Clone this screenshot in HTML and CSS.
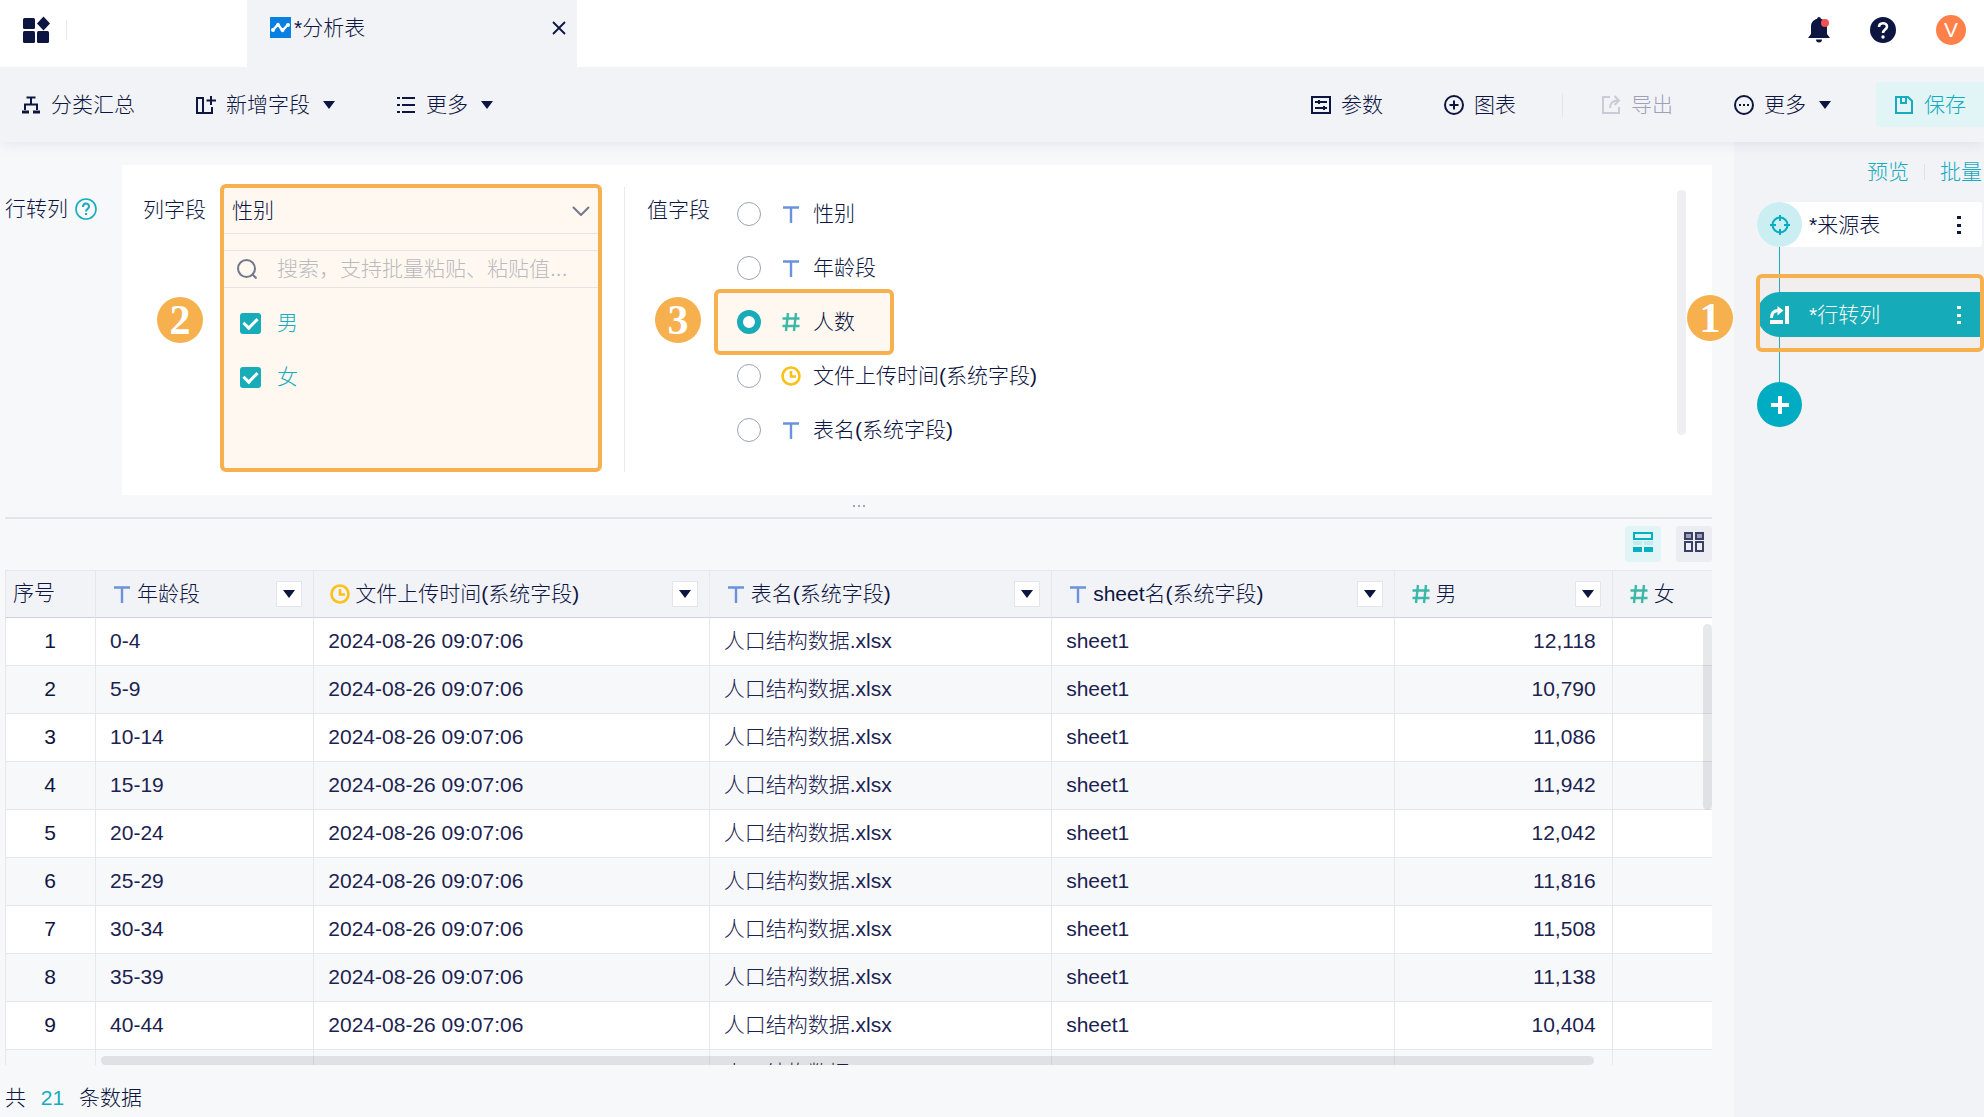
FILE: index.html
```html
<!doctype html>
<html lang="zh-CN">
  <head>
    <meta charset="utf-8" />
    <meta name="viewport" content="width=device-width, initial-scale=1" />
    <title>分析表</title>
    <link rel="stylesheet" href="styles.css">
  </head>
  <body>
    <!-- shared icons -->
    <svg class="sprite" aria-hidden="true">
      <symbol id="caret" viewBox="0 0 12 8"><path d="M0 0h12L6 8z" fill="currentColor" /></symbol>
      <symbol id="type-text" viewBox="0 0 20 20">
        <path d="M2 3.5h16M10 3.5V19" fill="none" stroke="#6a93dd" stroke-width="2.4" />
      </symbol>
      <symbol id="type-number" viewBox="0 0 20 20">
        <path d="M1.5 6.5h17M1.5 14h17M7 1L5 19M15 1l-2 18" fill="none" stroke="#3cb8a8" stroke-width="2.4" />
      </symbol>
      <symbol id="type-time" viewBox="0 0 20 20">
        <circle cx="10" cy="10" r="8.5" fill="none" stroke="#fbc116" stroke-width="2.6" />
        <path d="M10 5v5.5h5" fill="none" stroke="#fbc116" stroke-width="2.6" />
      </symbol>
      <symbol id="dots" viewBox="0 0 4 20">
        <path d="M0 1h4v3H0zM0 9h4v3H0zM0 16h4v3H0z" fill="currentColor" />
      </symbol>
    </svg>

    <div class="app">
      <header class="topbar">
        <button class="icon-btn apps" aria-label="应用">
          <svg width="28" height="28" viewBox="0 0 28 28" fill="currentColor">
            <rect x="0" y="2" width="12" height="11" rx="1.5" />
            <rect x="0" y="15" width="12" height="12" rx="1.5" />
            <rect x="14" y="15" width="12" height="12" rx="1.5" />
            <path d="M20.5 .5l6.500 7-6.500 7-6.500-7z" />
          </svg>
        </button>
        <div class="tab">
          <svg width="21" height="21" viewBox="0 0 21 21">
            <rect width="21" height="21" fill="#0780e2" />
            <path d="M3 13l5-5.500 4.500 6L18 7.500" fill="none" stroke="#fff" stroke-width="2.4" />
            <g fill="#fff"><circle cx="3" cy="13" r="2" /><circle cx="8" cy="8" r="2" /><circle cx="12.5" cy="13" r="2" /><circle cx="18" cy="8" r="2" /></g>
          </svg>
          <span class="tab-name">*分析表</span>
          <button class="icon-btn" aria-label="关闭">
            <svg width="14" height="14" viewBox="0 0 14 14"><path d="M1 1l12 12M13 1L1 13" stroke="currentColor" stroke-width="1.8" /></svg>
          </button>
        </div>
        <div class="account">
          <button class="icon-btn" aria-label="消息">
            <svg width="22" height="26" viewBox="0 0 22 26">
              <path d="M11 0c1 0 1.800.8 1.800 1.800C17 2.800 19 6 19 10v7l3 4H0l3-4v-7c0-4 2-7.200 6.200-8.200C9.200.8 10 0 11 0zM8 22.500h6a3 3 0 0 1-6 0z" fill="currentColor" />
              <circle cx="17" cy="6" r="4" fill="#f25050" />
            </svg>
          </button>
          <button class="icon-btn" aria-label="帮助">
            <svg width="26" height="26" viewBox="0 0 26 26">
              <circle cx="13" cy="13" r="13" fill="currentColor" />
              <path d="M9 10c0-5 8-5 8-.5 0 3-4 3-4 6.500" fill="none" stroke="#fff" stroke-width="2.6" />
              <circle cx="13" cy="20" r="1.7" fill="#fff" />
            </svg>
          </button>
          <button class="avatar">V</button>
        </div>
      </header>

      <nav class="toolbar">
        <button class="tool">
          <svg width="20" height="20" viewBox="0 0 20 20" fill="none" stroke="currentColor" stroke-width="2">
            <path d="M5.500 2.500h9M10 3v6M4 15v-5.500h12V15" /><path d="M1 17h7M12 17h7" stroke-width="3" />
          </svg>
          分类汇总
        </button>
        <button class="tool">
          <svg width="20" height="20" viewBox="0 0 20 20" fill="none" stroke="currentColor" stroke-width="2">
            <path d="M1 3h6v15H1zM7 18h9v-6M15 1v9M10.500 5.500H20" />
          </svg>
          新增字段
          <svg class="caret" width="12" height="8"><use href="#caret" /></svg>
        </button>
        <button class="tool">
          <svg width="20" height="20" viewBox="0 0 20 20" fill="none" stroke="currentColor" stroke-width="2">
            <path d="M6 3h13M6 10h13M6 17h13M1 3h3M1 10h3M1 17h3" />
          </svg>
          更多
          <svg class="caret" width="12" height="8"><use href="#caret" /></svg>
        </button>

        <div class="toolbar-right">
          <button class="tool">
            <svg width="20" height="20" viewBox="0 0 20 20" fill="none" stroke="currentColor" stroke-width="2">
              <path d="M1 2h18v16H1zM4 7h12M4 13h12M8 5v4M13 11v4" />
            </svg>
            参数
          </button>
          <button class="tool">
            <svg width="20" height="20" viewBox="0 0 20 20" fill="none" stroke="currentColor" stroke-width="2">
              <circle cx="10" cy="10" r="9" /><path d="M5.500 10h9M10 5.500v9" />
            </svg>
            图表
          </button>
          <button class="tool export" disabled>
            <svg width="20" height="20" viewBox="0 0 20 20" fill="none" stroke="#c9cbd6" stroke-width="2">
              <path d="M9 2H2v16h16v-6M9 13c0-5 2-7.500 8-7.500M13.500 1l4.500 4.500-4.500 4.500" />
            </svg>
            导出
          </button>
          <button class="tool">
            <svg width="20" height="20" viewBox="0 0 20 20" fill="none" stroke="currentColor" stroke-width="2">
              <circle cx="10" cy="10" r="9" /><path d="M5 10h2M9 10h2M13 10h2" />
            </svg>
            更多
            <svg class="caret" width="12" height="8"><use href="#caret" /></svg>
          </button>
          <button class="tool save">
            <svg width="20" height="20" viewBox="0 0 20 20" fill="none" stroke="currentColor" stroke-width="2">
              <path d="M2 2h12l4 4v12H2zM7 2v6h5V2" />
            </svg>
            保存
          </button>
        </div>
      </nav>

      <div class="body">
        <main class="main">
          <section class="config">
            <div class="config-title">
              行转列
              <svg width="22" height="22" viewBox="0 0 22 22" fill="none" stroke="#16abbe" stroke-width="1.6">
                <circle cx="11" cy="11" r="10" />
                <path d="M8 9c0-4.500 6-4.500 6-.5 0 2.500-3 2.500-3 5M11 15v2" stroke-width="2" />
              </svg>
            </div>
            <div class="panel">
              <label class="field-label" for="column-field">列字段</label>
              <span class="step step-two">2</span>
              <div class="picker">
                <div class="select">
                  <select id="column-field">
                    <option>性别</option>
                  </select>
                  <svg width="18" height="10" viewBox="0 0 18 10"><path d="M1 1l8 8 8-8" fill="none" stroke="#74788c" stroke-width="2" /></svg>
                </div>
                <div class="search">
                  <svg width="20" height="20" viewBox="0 0 20 20" fill="none" stroke="#74788c" stroke-width="2">
                    <circle cx="9.5" cy="9.5" r="8.5" /><path d="M15 15l4.500 4.500" />
                  </svg>
                  <input type="text" aria-label="搜索" placeholder="搜索，支持批量粘贴、粘贴值..." />
                </div>
                <div class="values">
                  <label class="value"><input type="checkbox" checked />男</label>
                  <label class="value"><input type="checkbox" checked />女</label>
                </div>
              </div>

              <div class="measure">
                <span class="field-label">值字段</span>
                <span class="step step-three">3</span>
                <div class="options">
                  <label class="option">
                    <input type="radio" name="measure" />
                    <svg width="20" height="20"><use href="#type-text" /></svg>
                    性别
                  </label>
                  <label class="option">
                    <input type="radio" name="measure" />
                    <svg width="20" height="20"><use href="#type-text" /></svg>
                    年龄段
                  </label>
                  <label class="option marked">
                    <input type="radio" name="measure" checked />
                    <svg width="20" height="20"><use href="#type-number" /></svg>
                    人数
                  </label>
                  <label class="option">
                    <input type="radio" name="measure" />
                    <svg width="20" height="20"><use href="#type-time" /></svg>
                    文件上传时间(系统字段)
                  </label>
                  <label class="option">
                    <input type="radio" name="measure" />
                    <svg width="20" height="20"><use href="#type-text" /></svg>
                    表名(系统字段)
                  </label>
                </div>
              </div>
              <div class="panel-scroll"></div>
            </div>
          </section>

          <div class="splitter">
            <svg width="12" height="2" viewBox="0 0 12 2"><path d="M0 0h2v2H0zM5 0h2v2H5zM10 0h2v2h-2z" fill="#a2a5b5" /></svg>
          </div>

          <div class="views">
            <button class="view active" aria-label="列表">
              <svg width="20" height="20" viewBox="0 0 20 20">
                <rect x="1" y="1" width="18" height="6" fill="none" stroke="#06b0c3" stroke-width="2" />
                <path d="M0 9h9v4H0zM11 9h9v4h-9z" fill="#c4ecf0" />
                <path d="M0 15h9v5H0zM11 15h9v5h-9z" fill="#06b0c3" />
              </svg>
            </button>
            <button class="view" aria-label="网格">
              <svg width="20" height="20" viewBox="0 0 20 20" fill="none" stroke="#3a3f66" stroke-width="2">
                <path d="M1 1h7v6H1zM12 1h7v6h-7z" fill="#9da0b3" />
                <path d="M1 10h7v9H1zM12 10h7v9h-7z" />
              </svg>
            </button>
          </div>

          <div class="grid">
            <table>
              <colgroup>
                <col class="col-index" />
                <col class="col-number" />
                <col class="col-time" />
                <col class="col-name" />
                <col class="col-name" />
                <col class="col-number" />
                <col class="col-number" />
              </colgroup>
              <thead>
                <tr>
                  <th>序号</th>
                  <th>
                    <div class="head">
                      <svg width="20" height="20"><use href="#type-text" /></svg>
                      <span>年龄段</span>
                      <button class="filter" aria-label="筛选"><svg width="12" height="8"><use href="#caret" /></svg></button>
                    </div>
                  </th>
                  <th>
                    <div class="head">
                      <svg width="20" height="20"><use href="#type-time" /></svg>
                      <span>文件上传时间(系统字段)</span>
                      <button class="filter" aria-label="筛选"><svg width="12" height="8"><use href="#caret" /></svg></button>
                    </div>
                  </th>
                  <th>
                    <div class="head">
                      <svg width="20" height="20"><use href="#type-text" /></svg>
                      <span>表名(系统字段)</span>
                      <button class="filter" aria-label="筛选"><svg width="12" height="8"><use href="#caret" /></svg></button>
                    </div>
                  </th>
                  <th>
                    <div class="head">
                      <svg width="20" height="20"><use href="#type-text" /></svg>
                      <span>sheet名(系统字段)</span>
                      <button class="filter" aria-label="筛选"><svg width="12" height="8"><use href="#caret" /></svg></button>
                    </div>
                  </th>
                  <th>
                    <div class="head">
                      <svg width="20" height="20"><use href="#type-number" /></svg>
                      <span>男</span>
                      <button class="filter" aria-label="筛选"><svg width="12" height="8"><use href="#caret" /></svg></button>
                    </div>
                  </th>
                  <th>
                    <div class="head">
                      <svg width="20" height="20"><use href="#type-number" /></svg>
                      <span>女</span>
                    </div>
                  </th>
                </tr>
              </thead>
              <tbody>
                <tr><td>1</td><td>0-4</td><td>2024-08-26 09:07:06</td><td>人口结构数据.xlsx</td><td>sheet1</td><td class="num">12,118</td><td></td></tr>
                <tr><td>2</td><td>5-9</td><td>2024-08-26 09:07:06</td><td>人口结构数据.xlsx</td><td>sheet1</td><td class="num">10,790</td><td></td></tr>
                <tr><td>3</td><td>10-14</td><td>2024-08-26 09:07:06</td><td>人口结构数据.xlsx</td><td>sheet1</td><td class="num">11,086</td><td></td></tr>
                <tr><td>4</td><td>15-19</td><td>2024-08-26 09:07:06</td><td>人口结构数据.xlsx</td><td>sheet1</td><td class="num">11,942</td><td></td></tr>
                <tr><td>5</td><td>20-24</td><td>2024-08-26 09:07:06</td><td>人口结构数据.xlsx</td><td>sheet1</td><td class="num">12,042</td><td></td></tr>
                <tr><td>6</td><td>25-29</td><td>2024-08-26 09:07:06</td><td>人口结构数据.xlsx</td><td>sheet1</td><td class="num">11,816</td><td></td></tr>
                <tr><td>7</td><td>30-34</td><td>2024-08-26 09:07:06</td><td>人口结构数据.xlsx</td><td>sheet1</td><td class="num">11,508</td><td></td></tr>
                <tr><td>8</td><td>35-39</td><td>2024-08-26 09:07:06</td><td>人口结构数据.xlsx</td><td>sheet1</td><td class="num">11,138</td><td></td></tr>
                <tr><td>9</td><td>40-44</td><td>2024-08-26 09:07:06</td><td>人口结构数据.xlsx</td><td>sheet1</td><td class="num">10,404</td><td></td></tr>
                <tr><td></td><td></td><td></td><td>人口结构数据.xlsx</td><td></td><td></td><td></td></tr>
              </tbody>
            </table>
            <div class="scroll-y"></div>
            <div class="scroll-x"></div>
          </div>

          <footer class="total">共 <span>21</span> 条数据</footer>
        </main>

        <aside class="side">
          <div class="side-links">
            <a href="#">预览</a>
            <a href="#">批量</a>
          </div>
          <div class="flow">
            <div class="node source">
              <span class="node-icon">
                <svg width="20" height="20" viewBox="0 0 20 20" fill="none" stroke="currentColor" stroke-width="2">
                  <circle cx="10" cy="10" r="7.5" /><path d="M10 0v6M10 14v6M0 10h6M14 10h6" />
                </svg>
              </span>
              <span class="node-name">*来源表</span>
              <button class="icon-btn" aria-label="更多"><svg width="4" height="20"><use href="#dots" /></svg></button>
            </div>
            <div class="node current">
              <span class="step step-one">1</span>
              <span class="node-icon">
                <svg width="20" height="20" viewBox="0 0 20 20" fill="currentColor">
                  <path d="M0 15h13v4H0zM15 1h4v18h-4z" />
                  <path d="M1.500 13c0-5 2.500-7.500 7-7.500" fill="none" stroke="currentColor" stroke-width="3" />
                  <path d="M7.500 1l6 4.500-6 5z" />
                </svg>
              </span>
              <span class="node-name">*行转列</span>
              <button class="icon-btn" aria-label="更多"><svg width="4" height="20"><use href="#dots" /></svg></button>
            </div>
            <button class="add" aria-label="添加">
              <svg width="20" height="20" viewBox="0 0 20 20"><path d="M10 1v18M1 10h18" stroke="#fff" stroke-width="4" /></svg>
            </button>
          </div>
        </aside>
      </div>
    </div>
  </body>
</html>
```

FILE: styles.css
```css
*,
*::before,
*::after {
  box-sizing: border-box;
}
body {
  margin: 0;
  color: #0d1541;
  background: #f7f8fa;
  font: 300 21px/30px "Liberation Sans", "Noto Sans CJK SC", sans-serif;
}
button,
input,
select {
  margin: 0;
  padding: 0;
  border: 0;
  background: none;
  color: inherit;
  font: inherit;
}
button {
  cursor: pointer;
}
a {
  color: #16abbe;
  text-decoration: none;
}
svg {
  display: block;
  flex: none;
}
.sprite {
  position: absolute;
  width: 0;
  height: 0;
}
.app {
  display: flex;
  flex-direction: column;
  height: 100vh;
  overflow: hidden;
}
.icon-btn {
  display: flex;
  align-items: center;
  justify-content: center;
}

/* top bar */
.topbar {
  position: relative;
  z-index: 3;
  display: flex;
  flex: none;
  height: 67px;
  background: #fff;
}
.apps {
  width: 67px;
  height: 20px;
  margin: 20px 180px 0 0;
  padding: 0 16px 0 23px;
  border-right: 1px solid #e8e9ee;
}
.tab {
  display: flex;
  align-items: center;
  width: 330px;
  padding: 0 11px 12px 23px;
  background: #f2f3f7;
}
.tab-name {
  flex: 1;
  margin-left: 3px;
}
.account {
  display: flex;
  align-items: center;
  gap: 40px;
  margin-left: auto;
  padding: 0 18px 8px 0;
}
.avatar {
  width: 30px;
  height: 30px;
  border-radius: 50%;
  background: #ff8048;
  color: #fff;
}

/* toolbar */
.toolbar {
  position: relative;
  z-index: 2;
  display: flex;
  flex: none;
  align-items: center;
  gap: 61px;
  height: 75px;
  padding-left: 21px;
  background: #f2f3f7;
  box-shadow: 0 0 16px rgba(13, 21, 65, 0.1);
}
.tool {
  display: flex;
  align-items: center;
  gap: 10px;
  white-space: nowrap;
}
.tool .caret {
  margin-left: 3px;
}
.toolbar-right {
  display: flex;
  align-items: center;
  gap: 61px;
  margin-left: auto;
}
.tool.export {
  margin-left: -15px;
  padding-left: 38px;
  border-left: 1px solid #e4e5ea;
  line-height: 24px;
  color: #9da0b6;
}
.tool.save {
  width: 108px;
  height: 45px;
  margin-left: -16px;
  padding-left: 18px;
  border-radius: 4px 0 0 4px;
  background: #e1f5f7;
  color: #16abbe;
}

/* layout */
.body {
  display: flex;
  flex: 1;
  min-height: 0;
}
.main {
  display: flex;
  flex: 1;
  flex-direction: column;
  min-width: 0;
  padding: 23px 22px 0 5px;
}

/* config */
.config {
  display: flex;
  flex: none;
  height: 330px;
}
.config-title {
  display: flex;
  align-items: center;
  gap: 7px;
  width: 117px;
  height: 30px;
  margin-top: 29px;
}
.panel {
  position: relative;
  display: flex;
  flex: 1;
  align-items: flex-start;
  padding: 19px 21px 23px;
  background: #fff;
}
.field-label {
  flex: none;
  width: 77px;
  margin-top: 11px;
}
.picker {
  width: 382px;
  height: 288px;
  border: 4px solid #f6b04e;
  border-radius: 6px;
  background: #fff8f0;
}
.select {
  display: flex;
  align-items: center;
  height: 46px;
  padding-right: 8px;
  border-bottom: 1px solid #e6e3e0;
}
.select select {
  flex: 1;
  height: 45px;
  padding-left: 8px;
  appearance: none;
}
.search {
  display: flex;
  align-items: center;
  gap: 20px;
  height: 38px;
  margin-top: 16px;
  padding: 0 13px;
  border: solid #e6e3e0;
  border-width: 1px 0;
}
.search input {
  flex: 1;
  min-width: 0;
  outline: none;
}
.search input::placeholder {
  color: #bbbabf;
}
.values {
  margin-top: 8px;
}
.value {
  display: flex;
  align-items: center;
  gap: 16px;
  height: 54px;
  padding-left: 16px;
  color: #16abbe;
}
.value input {
  position: relative;
  width: 21px;
  height: 21px;
  border-radius: 3px;
  appearance: none;
}
.value input:checked {
  background: #17acb8;
}
.value input:checked::after {
  content: "";
  position: absolute;
  left: 6px;
  top: 2px;
  width: 9px;
  height: 14px;
  border: solid #fff;
  border-width: 0 3px 3px 0;
  transform: rotate(45deg);
}
.measure {
  display: flex;
  align-self: stretch;
  margin: 3px 0 0 22px;
  padding-left: 22px;
  border-left: 1px solid #e8e9ee;
}
.measure .field-label {
  width: 90px;
  margin-top: 8px;
}
.option {
  position: relative;
  z-index: 0;
  display: flex;
  align-items: center;
  height: 54px;
  white-space: nowrap;
}
.option svg {
  margin: 0 12px 0 20px;
}
.option input {
  width: 24px;
  height: 24px;
  border: 1px solid #9ea2b3;
  border-radius: 50%;
  background: #fff;
  appearance: none;
}
.option input:checked {
  border: 6px solid #17acb8;
}
.marked::before {
  content: "";
  position: absolute;
  z-index: -1;
  inset: -6px auto -6px -23px;
  width: 180px;
  border: 4px solid #f6b04e;
  border-radius: 6px;
  background: #fff8f0;
}
.panel-scroll {
  position: absolute;
  top: 25px;
  right: 26px;
  width: 9px;
  height: 245px;
  border-radius: 5px;
  background: #eeeff2;
}

/* numbered steps */
.step {
  position: absolute;
  z-index: 1;
  width: 46px;
  height: 46px;
  border-radius: 50%;
  background: #f6b04e;
  color: #fff;
  font: bold 42px/46px "Liberation Serif", serif;
  text-align: center;
}
.step-one {
  left: -70px;
  top: 3px;
}
.step-two {
  left: 35px;
  top: 132px;
}
.step-three {
  left: 533px;
  top: 132px;
}

.splitter {
  display: flex;
  flex: none;
  justify-content: center;
  height: 24px;
  padding-top: 10px;
  border-bottom: 2px solid #e4e5ea;
}
.views {
  display: flex;
  flex: none;
  justify-content: flex-end;
  gap: 15px;
  padding: 7px 0 8px;
}
.view {
  display: flex;
  justify-content: center;
  width: 36px;
  height: 36px;
  padding-top: 6px;
  border-radius: 3px;
  background: #ecedf2;
}
.view.active {
  background: #e1f5f7;
}

/* data grid */
.grid {
  position: relative;
  flex: 1;
  min-height: 0;
  overflow: hidden;
}
table {
  min-width: 1826px;
  table-layout: fixed;
  border-spacing: 0;
}
.col-index {
  width: 91px;
}
.col-number {
  width: 218px;
}
.col-time {
  width: 395px;
}
.col-name {
  width: 342px;
}
th,
td {
  height: 48px;
  padding: 0 15px 2px 14px;
  border: solid #e6e7ec;
  border-width: 0 1px 1px 0;
  font-weight: inherit;
  text-align: left;
  white-space: nowrap;
}
th:first-child,
td:first-child {
  border-left-width: 1px;
}
th {
  padding: 0 11px 0 16px;
  border-top-width: 1px;
  border-bottom-color: #cfd0dc;
  background: #f2f3f7;
}
th:first-child {
  padding: 0 7px 2px;
}
td {
  background: #fff;
  color: #1b2350;
}
td:first-child {
  padding: 0 1px 2px 0;
  color: #0d1541;
  text-align: center;
}
tr:nth-child(even) td {
  background: #f7f8fa;
}
td.num {
  padding-right: 16px;
  text-align: right;
}
.head {
  display: flex;
  align-items: center;
  gap: 5px;
}
.filter {
  display: flex;
  align-items: center;
  justify-content: center;
  width: 26px;
  height: 26px;
  margin-left: auto;
  border: 1px solid #e4e5ea;
  background: #fff;
}
.scroll-y,
.scroll-x {
  position: absolute;
  border-radius: 5px;
  background: rgba(20, 25, 40, 0.1);
}
.scroll-y {
  top: 54px;
  right: 0;
  width: 9px;
  height: 186px;
}
.scroll-x {
  left: 96px;
  right: 118px;
  bottom: 0;
  height: 9px;
}
.total {
  flex: none;
  height: 52px;
  padding-top: 18px;
}
.total span {
  margin: 0 9px;
  color: #16abbe;
}

/* flow sidebar */
.side {
  flex: none;
  width: 250px;
  padding: 15px 2px 0 23px;
  background: #f2f3f7;
}
.side-links {
  display: flex;
  justify-content: flex-end;
}
.side-links a + a {
  height: 16px;
  margin: 7px 0 0 15px;
  padding-left: 15px;
  border-left: 1px solid #e0e1e7;
  line-height: 16px;
  white-space: nowrap;
}
.flow {
  position: relative;
  margin-top: 15px;
}
.flow::before {
  content: "";
  position: absolute;
  left: 22px;
  top: 45px;
  width: 1px;
  height: 135px;
  background: #17acb8;
}
.node {
  position: relative;
  display: flex;
  align-items: center;
  height: 45px;
  margin-bottom: 45px;
  padding-right: 21px;
  border-radius: 23px 3px 3px 23px;
  background: #fff;
}
.node-icon {
  display: flex;
  align-items: center;
  justify-content: center;
  width: 45px;
  height: 45px;
  border-radius: 50%;
}
.node-name {
  flex: 1;
  margin-left: 7px;
}
.source .node-icon {
  background: #cbeef2;
  color: #06acc0;
}
.current {
  background: #08acbf;
  color: #fff;
}
.current::after {
  content: "";
  position: absolute;
  inset: -18px -2px -15px -1px;
  border: 4px solid #f6b04e;
  border-radius: 6px;
  background: rgba(246, 176, 78, 0.06);
  pointer-events: none;
}
.add {
  display: flex;
  align-items: center;
  justify-content: center;
  width: 45px;
  height: 45px;
  border-radius: 50%;
  background: #00acc1;
}
```
